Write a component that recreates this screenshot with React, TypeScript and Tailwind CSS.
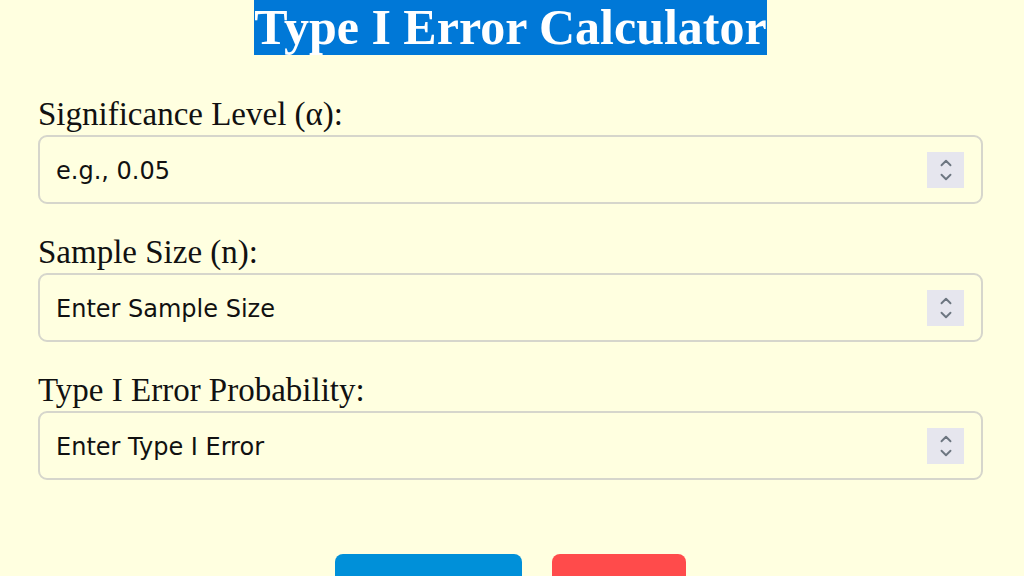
import { ChevronUp, ChevronDown } from 'lucide-react';

const fields = [
  { label: 'Significance Level (α):', placeholder: 'e.g., 0.05' },
  { label: 'Sample Size (n):', placeholder: 'Enter Sample Size' },
  { label: 'Type I Error Probability:', placeholder: 'Enter Type I Error' },
];

export default function App() {
  return (
    <div className="min-h-[576px] bg-[#ffffe0] pl-[38px] pr-[41px] pb-[20px]">
      <h1 className="text-center font-['Liberation_Serif',serif] text-[50px] font-bold leading-[54px] text-white">
        <span className="bg-[#0078d7]">Type I Error Calculator</span>
      </h1>

      <div className="mt-[41px]">
        {fields.map((f) => (
          <div key={f.label} className="mb-[29px]">
            <label className="block font-['Liberation_Serif',serif] text-[33px] leading-[38px] text-[#111]">
              {f.label}
            </label>
            <div className="mt-[2px] flex h-[69px] items-center rounded-[9px] border-2 border-[#d6d6cc] pl-[16px] pr-[17px]">
              <span className="flex-1 pt-[3px] font-['DejaVu_Sans',sans-serif] text-[24px] text-[#111]">
                {f.placeholder}
              </span>
              <div className="flex h-[36px] w-[37px] flex-col items-center justify-center bg-[#e6e6ee] text-[#6d7680]">
                <ChevronUp size={18} strokeWidth={2.5} className="-mb-[2px]" />
                <ChevronDown size={18} strokeWidth={2.5} className="-mt-[2px]" />
              </div>
            </div>
          </div>
        ))}
      </div>

      <div className="mt-[74px] flex justify-center gap-[30px]">
        <button className="h-[50px] w-[187px] rounded-[8px] bg-[#0090d9]" />
        <button className="h-[50px] w-[134px] rounded-[8px] bg-[#ff4b4b]" />
      </div>
    </div>
  );
}
